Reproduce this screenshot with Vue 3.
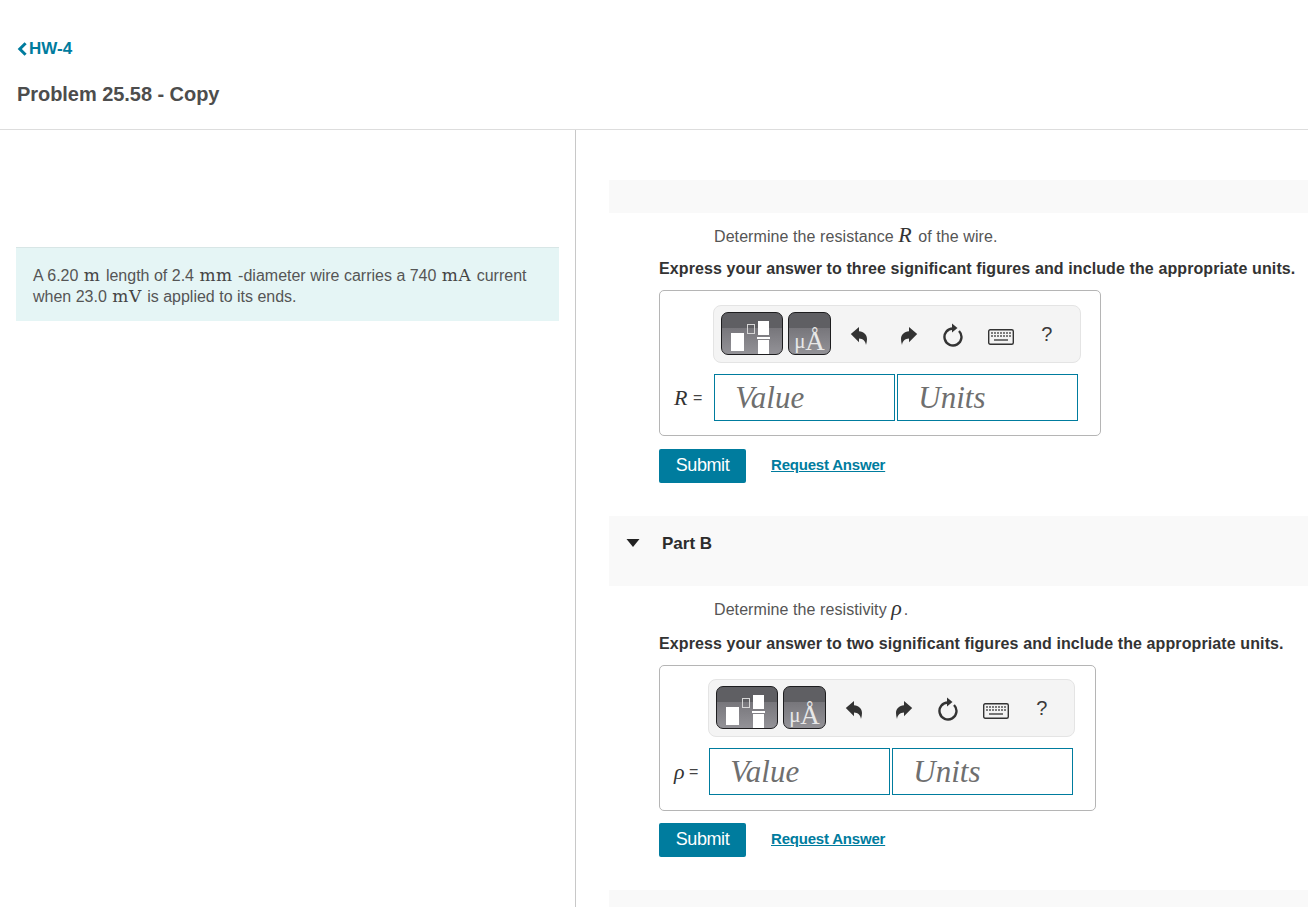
<script setup>
const parts = [
  { key: 'a', narrow: false, label: 'R', what: 'resistance', sym: 'R', tail: ' of the wire.', fig: 'three' },
  { key: 'b', narrow: true, label: 'ρ', what: 'resistivity', sym: 'ρ', tail: '.', fig: 'two' }
]
</script>

<template>
  <div class="page">
    <header class="head">
      <a class="back">
        <svg width="11" height="14" viewBox="0 0 11 14"><path d="M8.600 1.200 2.800 7l5.800 5.800" fill="none" stroke="#007c9e" stroke-width="3"/></svg>
        <span>HW-4</span>
      </a>
      <h1 class="title">Problem 25.58 - Copy</h1>
    </header>

    <div class="cols">
      <aside class="left">
        <div class="intro">
          A 6.20 <span class="unit">m</span> length of 2.4 <span class="unit">mm</span> -diameter wire carries a 740 <span class="unit">mA</span> current<br>
          when 23.0 <span class="unit">mV</span> is applied to its ends.
        </div>
      </aside>

      <main class="right">
        <div class="band band-top"></div>

        <template v-for="p in parts" :key="p.key">
          <div v-if="p.key === 'b'" class="band band-part">
            <svg class="caret" width="14" height="8" viewBox="0 0 14 8"><path d="M.5 0h13L7 8z" fill="#222"/></svg>
            <span class="part-name">Part B</span>
          </div>
          <section class="part" :class="{ 'part-b': p.narrow }">
            <p class="ask">Determine the {{ p.what }} <span class="sym">{{ p.sym }}</span>{{ p.tail }}</p>
            <p class="express">Express your answer to {{ p.fig }} significant figures and include the appropriate units.</p>

            <div class="box">
              <div class="toolbar">
                <button class="tool tool-frac">
                  <i class="w big"></i><i class="w tiny"></i><i class="w num"></i><i class="w bar"></i><i class="w den"></i>
                </button>
                <button class="tool tool-unit"><span class="mu">μ</span><span class="ang">Å</span></button>
                <svg class="ico ico-undo" width="18" height="20" viewBox="0 0 18 20"><path d="M.8 8 9 1v4.200c4.800.3 8 3.600 8 7.800 0 2-.4 4-1 6-.6-3.800-3-6.200-7-6.400v3.600z" fill="#333"/></svg>
                <svg class="ico ico-redo" width="18" height="20" viewBox="0 0 18 20"><path d="M17.200 8 9 1v4.200C4.200 5.500 1 8.800 1 13c0 2 .4 4 1 6 .6-3.800 3-6.200 7-6.400v3.600z" fill="#333"/></svg>
                <svg class="ico ico-reload" width="22" height="24" viewBox="0 0 22 24"><path d="M11 5.500A8.500 8.500 0 1 0 17 8" fill="none" stroke="#333" stroke-width="2.400"/><path d="M10 .5 15.500 5 10 9.500z" fill="#333"/></svg>
                <svg class="ico ico-keys" width="26" height="16" viewBox="0 0 26 16"><rect x=".7" y=".7" width="24.600" height="14.600" rx="1.500" fill="#f3f3f3" stroke="#333" stroke-width="1.400"/><path d="M3 4h20M3 7h20" stroke="#555" stroke-width="1.500" stroke-dasharray="2 1"/><path d="M6 11h14" stroke="#555" stroke-width="1.600"/></svg>
                <span class="help">?</span>
              </div>

              <span class="eq"><span class="sym sym-label">{{ p.label }}</span><span>=</span></span>
              <div class="inputs">
                <div class="field">Value</div>
                <div class="field">Units</div>
              </div>
            </div>

            <div class="actions">
              <button class="submit">Submit</button>
              <a class="req">Request Answer</a>
            </div>
          </section>
        </template>

        <div class="band band-end"></div>
      </main>
    </div>
  </div>
</template>

<style>
html, body { margin: 0; background: #fff; }
</style>

<style scoped>
.page {
  width: 1308px;
  height: 907px;
  overflow: hidden;
  display: flex;
  flex-direction: column;
  font-family: "Liberation Sans", Arial, sans-serif;
  font-size: 16px;
  color: #4a4a4a;
}
.head {
  height: 129px;
  flex: none;
  border-bottom: 1px solid #ddd;
  padding-left: 17px;
}
.back {
  display: flex;
  align-items: center;
  gap: 1px;
  padding-top: 39px;
  height: 20px;
  color: #007c9e;
  font-weight: 700;
  font-size: 17px;
}
.title {
  margin: 23px 0 0;
  font-size: 20px;
  line-height: 24px;
  font-weight: 700;
  letter-spacing: -0.05px;
  color: #4d4d4d;
}
.cols { flex: 1; display: flex; min-height: 0; }
.left {
  width: 543px;
  flex: none;
  border-right: 1px solid #c8c8c8;
  padding: 117px 16px 0;
}
.intro {
  background: #e5f5f5;
  border-top: 1px solid #d8e6e6;
  height: 74px;
  padding: 17px 17px 0;
  box-sizing: border-box;
  line-height: 21px;
  color: #555;
}
.unit {
  font-family: "DejaVu Serif", "Liberation Serif", serif;
  font-size: 17px;
  line-height: 0;
  margin: 0 1px;
  letter-spacing: 0.5px;
  color: #444;
}
.right { flex: 1; padding-left: 33px; padding-top: 50px; min-width: 0; }
.band { background: #f9f9f9; }
.band-top { height: 33px; }
.band-part {
  height: 70px;
  display: flex;
  align-items: flex-start;
  padding-left: 17px;
}
.caret { margin-top: 23px; }
.part-name {
  margin: 18px 0 0 22px;
  font-size: 17px;
  font-weight: 700;
  color: #2c2c2c;
  line-height: 20px;
}
.band-end { height: 40px; margin-top: 33px; }
.part { padding-left: 50px; height: 303px; box-sizing: border-box; }
.part-b { height: 271px; }
.ask {
  margin: 0;
  padding: 14px 0 0 55px;
  line-height: 20px;
  letter-spacing: 0.08px;
  color: #555;
}
.sym {
  font-family: "Liberation Serif", serif;
  font-style: italic;
  font-size: 22px;
  line-height: 0;
  letter-spacing: 2px;
  color: #333;
}
.express {
  margin: 12px 0 0;
  line-height: 20px;
  font-weight: 700;
  letter-spacing: 0.105px;
  color: #333;
}
.part-b .express { margin-top: 14px; }
.box {
  margin-top: 11px;
  display: grid;
  width: fit-content;
  grid-template-columns: auto auto;
  align-items: center;
  column-gap: 12px;
  row-gap: 11px;
  border: 1px solid #b5b5b5;
  border-radius: 5px;
  padding: 14px 22px 14px 14px;
}
.part-b .box { padding-top: 13px; padding-bottom: 15px; column-gap: 11px; }
.toolbar {
  grid-column: 2;
  position: relative;
  height: 58px;
  margin-left: -1px;
  margin-right: -3px;
  box-sizing: border-box;
  background: #f4f4f4;
  border: 1px solid #e4e4e4;
  border-radius: 8px;
}
.part-b .toolbar { margin-right: -2px; }
.tool {
  position: absolute;
  top: 6px;
  height: 43px;
  padding: 0;
  border: 1px solid #1d1d1f;
  border-radius: 7px;
  background: linear-gradient(#5f5f63 0 15px, #77767b 15px, #939297 100%);
  overflow: hidden;
}
.tool-frac { left: 7px; width: 62px; }
.tool-unit { left: 74px; width: 43px; }
.tool-unit span {
  position: absolute;
  font-family: "Liberation Serif", serif;
  line-height: 24px;
  color: #e8e8e8;
  bottom: 1px;
}
.mu { left: 5px; font-size: 21px; }
.ang { left: 16px; font-size: 27px; }
.w { position: absolute; background: #fff; display: block; }
.big { left: 9px; top: 20px; width: 13px; height: 18px; }
.tiny { left: 25px; top: 11px; width: 8px; height: 10px; background: transparent; border: 1px solid #d6d6d6; box-sizing: border-box; }
.num { left: 36px; top: 8px; width: 11px; height: 14px; }
.bar { left: 35px; top: 24px; width: 13px; height: 2px; }
.den { left: 36px; top: 27px; width: 11px; height: 14px; }
.ico { position: absolute; top: 50%; margin-top: 2px; transform: translateY(-50%); }
.ico-undo { left: 136px; }
.ico-redo { left: 186px; }
.ico-reload { left: 228px; margin-top: 1px; }
.ico-keys { left: 274px; margin-top: 3px; }
.help {
  position: absolute;
  left: 327px;
  top: 17px;
  font-size: 20px;
  line-height: 22px;
  color: #3a3a3a;
}
.eq {
  grid-column: 1;
  grid-row: 2;
  display: flex;
  align-items: center;
  gap: 3px;
  font-size: 16px;
  color: #444;
  white-space: nowrap;
}
.part-b .eq { gap: 4px; }
.sym-label { width: 16px; line-height: 22px; letter-spacing: 0; }
.part-b .sym-label { width: 11px; }
.inputs { grid-column: 2; grid-row: 2; display: flex; gap: 2px; }
.field {
  width: 181px;
  height: 47px;
  box-sizing: border-box;
  border: 1px solid #007c9e;
  padding-left: 20px;
  font-family: "Liberation Serif", serif;
  font-style: italic;
  font-size: 31px;
  line-height: 45px;
  color: #6f6f6f;
}
.actions { display: flex; align-items: center; margin-top: 13px; gap: 25px; }
.part-b .actions { margin-top: 12px; }
.submit {
  width: 87px;
  height: 34px;
  padding: 0 0 2px;
  border: 0;
  border-radius: 2px;
  background: #007c9e;
  color: #fff;
  font-family: "Liberation Sans", Arial, sans-serif;
  font-size: 18px;
  letter-spacing: -0.4px;
}
.req {
  color: #007c9e;
  font-weight: 700;
  font-size: 15px;
  letter-spacing: -0.2px;
  margin-bottom: 3px;
  text-decoration: underline;
}
</style>
